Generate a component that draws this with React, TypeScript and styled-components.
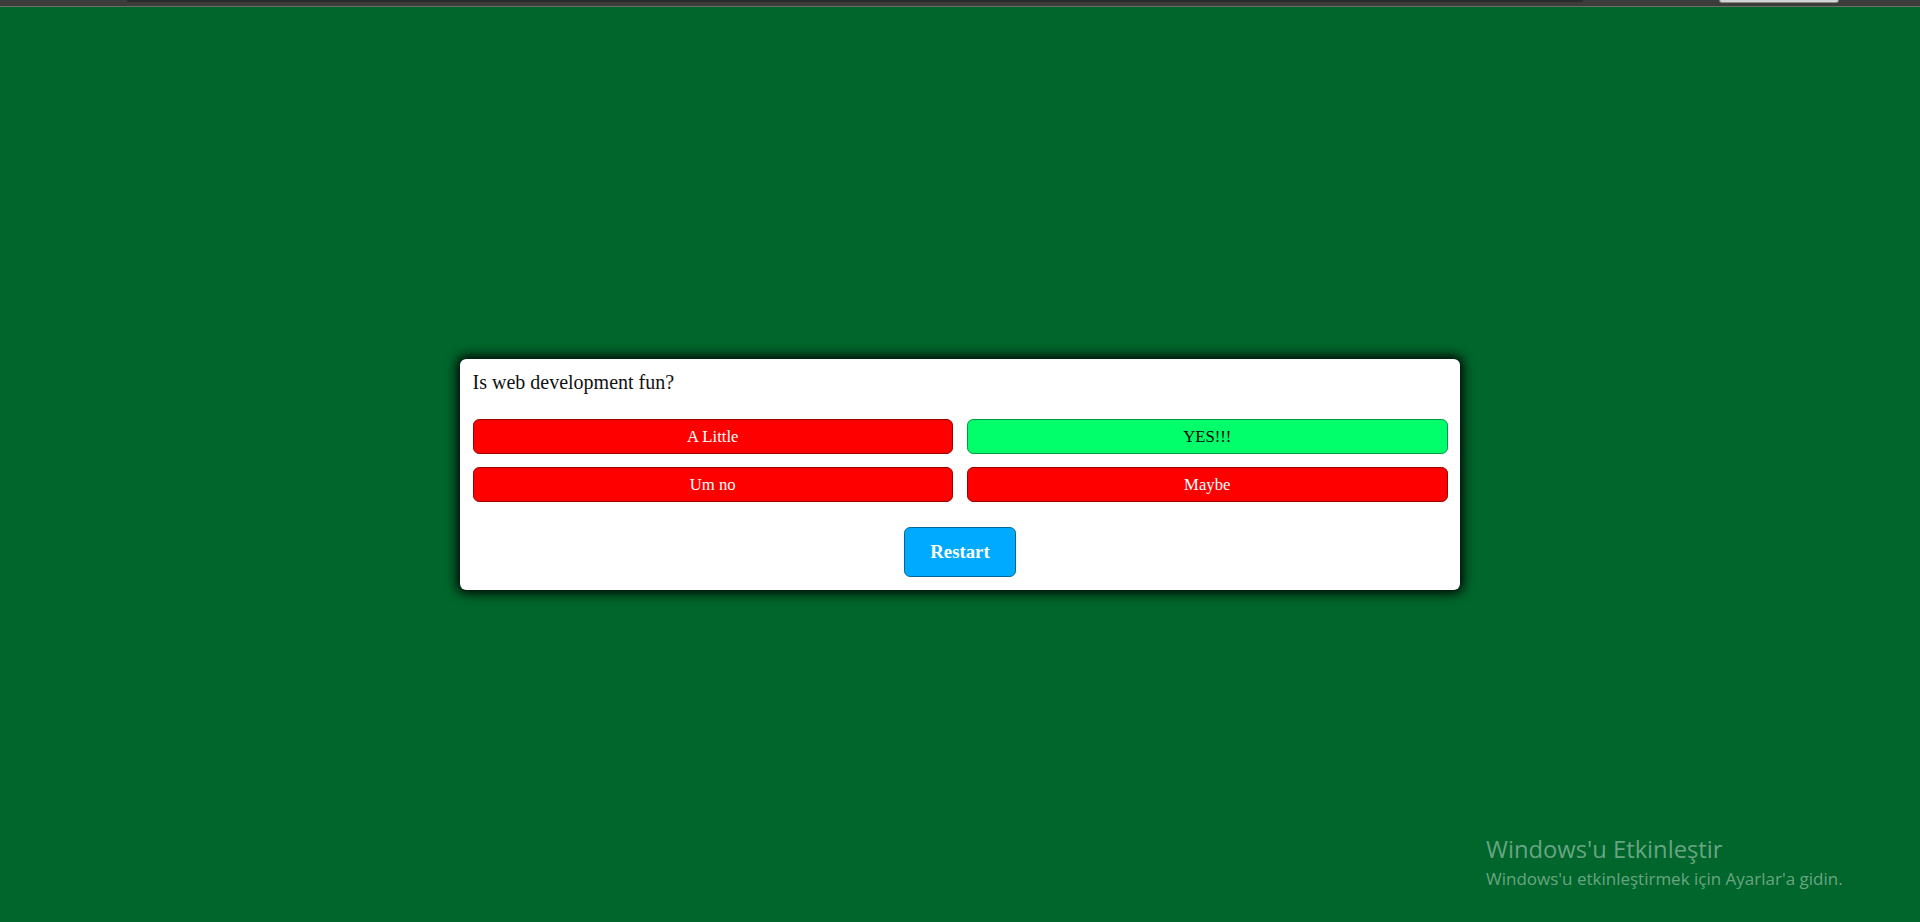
import React, { useState } from 'react';
import styled, { createGlobalStyle, css } from 'styled-components';

type Answer = { text: string; correct: boolean };

const answers: Answer[] = [
  { text: 'A Little', correct: false },
  { text: 'YES!!!', correct: true },
  { text: 'Um no', correct: false },
  { text: 'Maybe', correct: false },
];

const GlobalStyle = createGlobalStyle`
  html, body {
    margin: 0;
    padding: 0;
    height: 100%;
    overflow: hidden;
  }
  body {
    font-family: "Liberation Serif", "Times New Roman", serif;
    background: hsl(145, 100%, 20%);
  }
`;

const Page = styled.div`
  position: relative;
  display: flex;
  flex-direction: column;
  width: 100vw;
  height: 100vh;
  background: hsl(145, 100%, 20%);
`;

// strip of browser chrome left at the top of the screenshot
const TopBar = styled.div`
  flex-shrink: 0;
  display: flex;
  align-items: flex-start;
  height: 6px;
  padding-left: 127px;
  background: #3c3c3c;
  border-bottom: 1px solid #6c6c6c;
`;

const AddressStrip = styled.div`
  width: 1456px;
  height: 2px;
  background: #2a2a2a;
  border-radius: 0 0 3px 3px;
`;

const ProfilePill = styled.div`
  width: 118px;
  height: 2px;
  margin-left: 137px;
  background: #d4d4d4;
  border-radius: 0 0 4px 4px;
  box-shadow: 0 0 0 1px #8a8a8a;
`;

const Main = styled.main`
  flex: 1;
  display: flex;
  justify-content: center;
  align-items: center;
  padding-top: 19.5px;
`;

const Card = styled.div`
  width: 1000px;
  box-sizing: border-box;
  padding: 12.5px;
  background: #fff;
  border-radius: 6.25px;
  box-shadow: 0 0 12px 2.5px #000;
`;

const Question = styled.div`
  font-size: 20px;
  color: #111;
`;

const AnswerGrid = styled.div`
  display: grid;
  grid-template-columns: repeat(2, 1fr);
  gap: 12.5px 14px;
  margin: 25px 0;
`;

const AnswerButton = styled.button<{ $correct: boolean }>`
  font-family: inherit;
  font-size: 16.67px;
  line-height: 19px;
  padding: 7px 12.5px;
  border-radius: 6.25px;
  cursor: pointer;
  outline: none;

  ${props =>
    props.$correct
      ? css`
          background: hsl(145, 100%, 50%);
          border: 1.25px solid hsl(145, 100%, 30%);
          color: #000;
        `
      : css`
          background: hsl(0, 100%, 50%);
          border: 1.25px solid hsl(0, 100%, 30%);
          color: #fff;
        `};
`;

const Controls = styled.div`
  display: flex;
  justify-content: center;
`;

const RestartButton = styled.button`
  font-family: inherit;
  font-size: 18.75px;
  font-weight: bold;
  line-height: 21.5px;
  padding: 13.5px 25px;
  color: #fff;
  background: hsl(200, 100%, 50%);
  border: 1.25px solid hsl(200, 100%, 30%);
  border-radius: 6.25px;
  cursor: pointer;
`;

// Windows activation watermark sitting over the page
const Watermark = styled.div`
  position: absolute;
  left: 1486px;
  top: 833px;
  font-family: "Open Sans", "Noto Sans", sans-serif;
  color: rgba(255, 255, 255, 0.42);
  pointer-events: none;
  white-space: nowrap;
`;

const WatermarkTitle = styled.div`
  font-size: 23.75px;
  line-height: 32px;
`;

const WatermarkText = styled.div`
  font-size: 17px;
  line-height: 20px;
  margin-top: 4px;
`;

export default function App() {
  const [question] = useState('Is web development fun?');

  return (
    <>
      <GlobalStyle />
      <Page>
        <TopBar>
          <AddressStrip />
          <ProfilePill />
        </TopBar>
        <Main>
          <Card>
            <Question>{question}</Question>
            <AnswerGrid>
              {answers.map(answer => (
                <AnswerButton key={answer.text} $correct={answer.correct}>
                  {answer.text}
                </AnswerButton>
              ))}
            </AnswerGrid>
            <Controls>
              <RestartButton>Restart</RestartButton>
            </Controls>
          </Card>
        </Main>
        <Watermark>
          <WatermarkTitle>Windows'u Etkinleştir</WatermarkTitle>
          <WatermarkText>Windows'u etkinleştirmek için Ayarlar'a gidin.</WatermarkText>
        </Watermark>
      </Page>
    </>
  );
}
